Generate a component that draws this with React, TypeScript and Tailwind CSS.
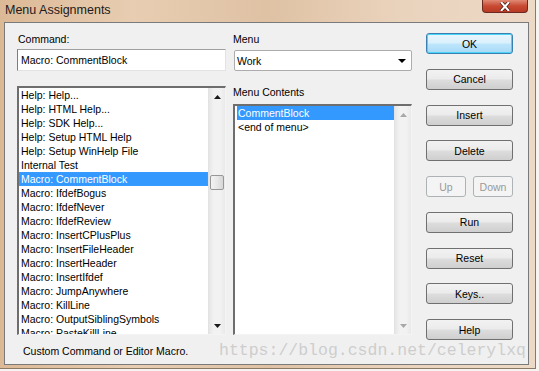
import React from "react";

const leftItems = [
  "Help: Help...",
  "Help: HTML Help...",
  "Help: SDK Help...",
  "Help: Setup HTML Help",
  "Help: Setup WinHelp File",
  "Internal Test",
  "Macro: CommentBlock",
  "Macro: IfdefBogus",
  "Macro: IfdefNever",
  "Macro: IfdefReview",
  "Macro: InsertCPlusPlus",
  "Macro: InsertFileHeader",
  "Macro: InsertHeader",
  "Macro: InsertIfdef",
  "Macro: JumpAnywhere",
  "Macro: KillLine",
  "Macro: OutputSiblingSymbols",
  "Macro: PasteKillLine",
];

function Arrow({ up, color }: { up?: boolean; color: string }) {
  return (
    <svg width="7" height="4" viewBox="0 0 7 4">
      <path d={up ? "M0 4 L3.5 0 L7 4 Z" : "M0 0 L3.5 4 L7 0 Z"} fill={color} />
    </svg>
  );
}

function ScrollBar({ thumb, disabled }: { thumb?: boolean; disabled?: boolean }) {
  const c = disabled ? "#a8a8a8" : "#1a1a1a";
  return (
    <div className="flex h-full w-[17px] shrink-0 flex-col border-l border-[#e2e2e2] bg-[linear-gradient(90deg,#e6e6e6,#f2f2f2_30%,#f2f2f2_70%,#e9e9e9)]">
      <div className="flex h-[17px] items-center justify-center">
        <Arrow up color={c} />
      </div>
      <div className="flex-1">
        {thumb && (
          <div className="mx-[1px] mt-[70px] h-[15px] rounded-[2px] border border-[#979797] bg-[linear-gradient(90deg,#f3f3f3,#e8e8e8_50%,#d6d6d6)]" />
        )}
      </div>
      <div className="flex h-[17px] items-center justify-center">
        <Arrow color={c} />
      </div>
    </div>
  );
}

function Btn({
  label,
  primary,
  disabled,
  className = "w-[87px]",
}: {
  label: string;
  primary?: boolean;
  disabled?: boolean;
  className?: string;
}) {
  let look =
    "border-[#707070] bg-[linear-gradient(#f2f2f2,#ebebeb_48%,#dddddd_52%,#cfcfcf)] text-[#000]";
  if (primary)
    look =
      "border-[#3c7fb1] bg-[linear-gradient(#eaf6fd,#d9f0fc_48%,#bee6fd_52%,#a7d9f5)] text-[#000] shadow-[inset_0_0_0_1px_#48d5f9]";
  if (disabled) look = "border-[#adb2b5] bg-[#f4f4f4] text-[#9a9a9a]";
  return (
    <div
      className={`flex h-[21px] items-center justify-center rounded-[3px] border text-[10.5px] leading-[14px] ${look} ${className}`}
    >
      {label}
    </div>
  );
}

export default function App() {
  return (
    <div className="relative h-[371px] w-[539px] overflow-hidden bg-[#f6f3f0] font-['Liberation_Sans',Arial,sans-serif]">
      <div className="flex h-[369px] w-[536px] flex-col border-r border-b border-[#8a7868] bg-[linear-gradient(90deg,#dcb996,#e8cdb2_25%,#dfc2a4_50%,#ead3bd_75%,#ecd9c6)]">
        {/* title bar */}
        <div className="flex h-[22px] shrink-0 items-start justify-between">
          <div className="pl-[5px] pt-[3px] text-[12.5px] leading-[15px] text-[#1b1b1b]">
            Menu Assignments
          </div>
          <div className="mr-[7px] flex h-[13px] w-[46px] items-end justify-center rounded-b-[4px] border border-t-0 border-[#6a2a20] bg-[linear-gradient(#e08a75,#c84a33_50%,#b83a24)] pb-[1px]">
            <svg width="12" height="9" viewBox="0 0 12 9">
              <path d="M2 0 L10 9 M10 0 L2 9" stroke="#4a1a12" strokeWidth="3.5" />
              <path d="M2 0 L10 9 M10 0 L2 9" stroke="#ffffff" strokeWidth="2" />
            </svg>
          </div>
        </div>

        {/* client area */}
        <div className="pl-[4px]">
          <div className="flex h-[343px] w-[525px] border border-[#7a7a7a] bg-[#f0f0f0] pl-[12px] pt-[9px] text-[10.5px] leading-[14px] text-black">
            {/* left column */}
            <div className="flex w-[209px] flex-col">
              <div className="h-[14px] pl-[1px]">Command:</div>
              <div className="mt-[3px] flex h-[22px] items-center border border-t-[#a0a0a0] border-l-[#7d7d7d] border-r-[#e3e3e3] border-b-[#e3e3e3] bg-white pl-[3px]">
                Macro: CommentBlock
              </div>
              <div className="mt-[15px] flex h-[249px] border-t-2 border-l-2 border-r border-b border-t-[#6e6e6e] border-l-[#6e6e6e] border-r-[#f4f4f4] border-b-[#f4f4f4] bg-white">
                <div className="flex-1 overflow-hidden">
                  {leftItems.map((t) =>
                    t === "Macro: CommentBlock" ? (
                      <div
                        key={t}
                        className="h-[14px] border border-dotted border-[#c77f3a] bg-[#3399ff] pl-[1px] leading-[12px] text-white"
                      >
                        {t}
                      </div>
                    ) : (
                      <div key={t} className="h-[14px] whitespace-nowrap pl-[2px]">
                        {t}
                      </div>
                    )
                  )}
                </div>
                <ScrollBar thumb />
              </div>
              <div className="mt-[9px] pl-[6px]">Custom Command or Editor Macro.</div>
            </div>

            {/* middle column */}
            <div className="ml-[7px] flex w-[179px] flex-col">
              <div className="h-[14px]">Menu</div>
              <div className="ml-[1px] mt-[4px] flex h-[21px] items-center justify-between rounded-[2px] border border-[#acacac] bg-white pl-[2px] pr-[5px]">
                <span>Work</span>
                <svg width="8" height="4" viewBox="0 0 8 4">
                  <path d="M0 0 L4 4 L8 0 Z" fill="#000" />
                </svg>
              </div>
              <div className="mt-[14px] h-[14px]">Menu Contents</div>
              <div className="mt-[5px] flex h-[231px] border-t-2 border-l-2 border-r border-b border-t-[#6e6e6e] border-l-[#6e6e6e] border-r-[#f4f4f4] border-b-[#f4f4f4] bg-white">
                <div className="flex-1 overflow-hidden pl-[2px]">
                  <div className="h-[14px] bg-[#3399ff] pl-[1px] text-white">CommentBlock</div>
                  <div className="h-[14px] pl-[1px]">&lt;end of menu&gt;</div>
                </div>
                <ScrollBar disabled />
              </div>
            </div>

            {/* buttons */}
            <div className="ml-[14px] mt-[1px] flex w-[87px] flex-col gap-[14.75px]">
              <Btn label="OK" primary />
              <Btn label="Cancel" />
              <Btn label="Insert" />
              <Btn label="Delete" />
              <div className="flex justify-between">
                <Btn label="Up" disabled className="w-[40px]" />
                <Btn label="Down" disabled className="w-[40px]" />
              </div>
              <Btn label="Run" />
              <Btn label="Reset" />
              <Btn label="Keys.." />
              <Btn label="Help" />
            </div>
          </div>
        </div>
      </div>

      {/* watermark */}
      <div className="absolute left-[219px] top-[341px] font-['Liberation_Mono',monospace] text-[16.5px] leading-[20px] text-[#c9c9c9]/90">
        https://blog.csdn.net/celerylxq
      </div>
    </div>
  );
}
